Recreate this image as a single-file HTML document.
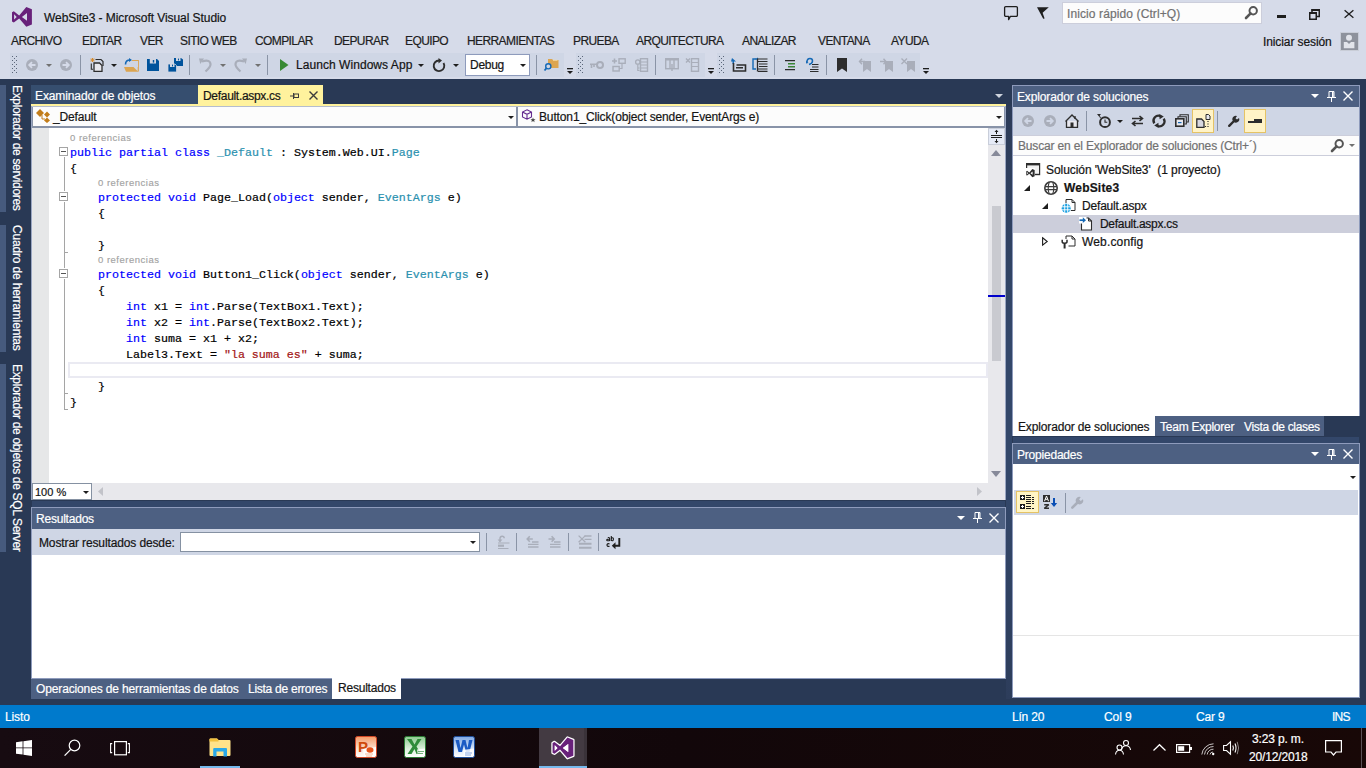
<!DOCTYPE html>
<html><head><meta charset="utf-8">
<style>
*{margin:0;padding:0;box-sizing:border-box}
html,body{width:1366px;height:768px;overflow:hidden;background:#293955;font-family:"Liberation Sans",sans-serif;font-size:11.5px;color:#141414}
.a{position:absolute}
.t{position:absolute;white-space:nowrap;line-height:1;-webkit-text-stroke:0.2px currentColor}
svg{position:absolute;overflow:visible}
.menu{top:35px;font-size:12px;letter-spacing:-0.6px;color:#1E1E1E}
.tb{position:absolute;background:#CFD6E5;top:53px;height:24px}
.sep{position:absolute;top:55px;width:1px;height:20px;background:#8A94A6}
.grip{position:absolute;top:56px;width:6px;height:18px;background-image:radial-gradient(circle at 1px 1px,#5E6A7E 0.9px,transparent 1px);background-size:4px 4px;background-position:0 0}
.vt{position:absolute;left:0;width:6px;background:#465A7D}
.vtext{position:absolute;color:#fff;-webkit-text-stroke:0.2px #fff;white-space:nowrap;line-height:1;transform-origin:0 0;transform:rotate(90deg)}
.code{position:absolute;left:70px;font-family:"Liberation Mono",monospace;font-size:11.67px;line-height:16px;height:16px;white-space:pre;color:#000;-webkit-text-stroke:0.2px currentColor}
.k{color:#0000FF}.ty{color:#2B91AF}.s{color:#A31515}
.cl{position:absolute;font-size:9.5px;letter-spacing:0.5px;color:#A3A3A3;white-space:nowrap;line-height:1;-webkit-text-stroke:0.15px currentColor}
.twt{position:absolute;background:#4D6082;color:#fff}
.wt{color:#fff}
.ob{position:absolute;left:59px;width:9px;height:9px;border:1px solid #A5A5A5;background:#fff}
.ob:after{content:"";position:absolute;left:1px;top:3px;width:5px;height:1px;background:#555}
.ol{position:absolute;left:63px;width:1px;background:#A5A5A5}
</style></head><body>
<!-- ===== TOP AREA ===== -->
<div class="a" style="left:0;top:0;width:1366px;height:79px;background:#D6DBE9"></div>
<svg style="left:12px;top:7px" width="20" height="20" viewBox="0 0 20 20"><path fill="#68217A" fill-rule="evenodd" d="M0 5.2 L1.8 4.2 L7.2 8.4 L14.3 0 L19.9 2.3 V17.5 L14.3 19.7 L7.2 11.4 L1.8 15.5 L0 14.6 Z M2.1 7.3 L4.7 9.9 L2.1 12.6 Z M9.9 9.9 L15 6.1 V13.8 Z"/></svg>
<div class="t" style="left:44px;top:12px;font-size:12px;letter-spacing:-0.061px">WebSite3 - Microsoft Visual Studio</div>

<div class="t menu" style="left:11px">ARCHIVO</div>
<div class="t menu" style="left:82px">EDITAR</div>
<div class="t menu" style="left:140px">VER</div>
<div class="t menu" style="left:180px">SITIO WEB</div>
<div class="t menu" style="left:255px">COMPILAR</div>
<div class="t menu" style="left:334px">DEPURAR</div>
<div class="t menu" style="left:405px">EQUIPO</div>
<div class="t menu" style="left:467px">HERRAMIENTAS</div>
<div class="t menu" style="left:573px">PRUEBA</div>
<div class="t menu" style="left:636px">ARQUITECTURA</div>
<div class="t menu" style="left:742px">ANALIZAR</div>
<div class="t menu" style="left:818px">VENTANA</div>
<div class="t menu" style="left:891px">AYUDA</div>

<!-- feedback / filter -->
<svg style="left:1004px;top:6px" width="15" height="15" viewBox="0 0 15 15"><path d="M1.7 0.65 H12.3 A1.1 1.1 0 0 1 13.4 1.75 V9.3 A1.1 1.1 0 0 1 12.3 10.4 H6.4 L4.6 13.6 V10.4 H1.7 A1.1 1.1 0 0 1 0.6 9.3 V1.75 A1.1 1.1 0 0 1 1.7 0.65 Z" fill="none" stroke="#1E1E1E" stroke-width="1.3" stroke-linejoin="round"/></svg>
<svg style="left:1037px;top:7px" width="12" height="12" viewBox="0 0 12 12"><path d="M0 0.2 H11.8 L5.6 5.8 L7.6 11.5 L6.2 11.8 Z" fill="#1E1E1E"/></svg>
<div class="a" style="left:1062px;top:2px;width:200px;height:22px;background:#FCFCFC;border:1px solid #CCCEDB"></div>
<div class="t" style="left:1067px;top:8px;font-size:12px;letter-spacing:0.107px;color:#717171">Inicio rápido (Ctrl+Q)</div>
<svg style="left:1245px;top:6px" width="13" height="13" viewBox="0 0 13 13"><circle cx="8.2" cy="4.8" r="3.7" fill="none" stroke="#555" stroke-width="2"/><path d="M5.6 7.4 L1 12" stroke="#555" stroke-width="2.6" stroke-linecap="round"/></svg>
<div class="a" style="left:1277px;top:15px;width:9px;height:3px;background:#1E1E1E"></div>
<svg style="left:1309px;top:9px" width="11" height="11" viewBox="0 0 11 11"><path d="M3 3 V0.75 H10.25 V7.5 H7.75" fill="none" stroke="#1E1E1E" stroke-width="1.5"/><rect x="0.75" y="3.75" width="6.5" height="6.5" fill="none" stroke="#1E1E1E" stroke-width="1.5"/><rect x="0" y="3" width="8" height="2" fill="#1E1E1E"/><rect x="2.5" y="0" width="8.5" height="2" fill="#1E1E1E"/></svg>
<svg style="left:1344px;top:10px" width="10" height="8" viewBox="0 0 10 8"><path d="M0.6 0.3 L9.4 7.7 M9.4 0.3 L0.6 7.7" stroke="#1E1E1E" stroke-width="1.3"/></svg>
<div class="t" style="left:1263px;top:36px;font-size:12px;letter-spacing:-0.102px">Iniciar sesión</div>
<svg style="left:1340px;top:32px" width="19" height="19" viewBox="0 0 19 19"><rect x="0.5" y="0.5" width="18" height="18" fill="#8E929C" stroke="#C9CDD7" stroke-width="1"/><circle cx="9" cy="5.8" r="3" fill="#E2E4EA"/><path d="M3.8 10 H7 L9 12 L11 10 H14.4 V16.2 H3.8 Z" fill="#E2E4EA"/></svg>

<!-- toolbars -->
<div class="tb" style="left:10px;width:554px"></div>
<div class="tb" style="left:576px;width:129px"></div>
<div class="tb" style="left:717px;width:203px"></div>
<svg style="left:12px;top:56px" width="5" height="17" viewBox="0 0 5 17"><path fill="#5A6679" d="M0 0h1v1h-1z M4 0h1v1h-1z M2 2h1v1h-1z M0 4h1v1h-1z M4 4h1v1h-1z M2 6h1v1h-1z M0 8h1v1h-1z M4 8h1v1h-1z M2 10h1v1h-1z M0 12h1v1h-1z M4 12h1v1h-1z M2 14h1v1h-1z M0 16h1v1h-1z M4 16h1v1h-1z"/></svg>
<svg style="left:578px;top:56px" width="5" height="17" viewBox="0 0 5 17"><path fill="#5A6679" d="M0 0h1v1h-1z M4 0h1v1h-1z M2 2h1v1h-1z M0 4h1v1h-1z M4 4h1v1h-1z M2 6h1v1h-1z M0 8h1v1h-1z M4 8h1v1h-1z M2 10h1v1h-1z M0 12h1v1h-1z M4 12h1v1h-1z M2 14h1v1h-1z M0 16h1v1h-1z M4 16h1v1h-1z"/></svg>
<svg style="left:719px;top:56px" width="5" height="17" viewBox="0 0 5 17"><path fill="#5A6679" d="M0 0h1v1h-1z M4 0h1v1h-1z M2 2h1v1h-1z M0 4h1v1h-1z M4 4h1v1h-1z M2 6h1v1h-1z M0 8h1v1h-1z M4 8h1v1h-1z M2 10h1v1h-1z M0 12h1v1h-1z M4 12h1v1h-1z M2 14h1v1h-1z M0 16h1v1h-1z M4 16h1v1h-1z"/></svg>
<div class="sep" style="left:80px"></div>
<div class="sep" style="left:189px"></div>
<div class="sep" style="left:267px"></div>
<div class="sep" style="left:536px"></div>
<div class="sep" style="left:655px"></div>
<div class="sep" style="left:774px"></div>
<div class="sep" style="left:826px"></div>
<!-- back/forward -->
<svg style="left:26px;top:59px" width="12" height="12" viewBox="0 0 12 12"><circle cx="6" cy="6" r="6" fill="#A9AEBA"/><path d="M9.5 6 H3.5 M6 3.2 L3.2 6 L6 8.8" fill="none" stroke="#D6DBE9" stroke-width="1.8"/></svg>
<svg style="left:46px;top:64px" width="6" height="3" viewBox="0 0 6 3"><path d="M0 0 H6 L3 3Z" fill="#717171"/></svg>
<svg style="left:60px;top:59px" width="12" height="12" viewBox="0 0 12 12"><circle cx="6" cy="6" r="6" fill="#A9AEBA"/><path d="M2.5 6 H8.5 M6 3.2 L8.8 6 L6 8.8" fill="none" stroke="#D6DBE9" stroke-width="1.8"/></svg>
<!-- new project -->
<svg style="left:90px;top:57px" width="14" height="15" viewBox="0 0 14 15"><path d="M2.5 1 L2.5 5 M0.5 3 H4.5 M1 1.5 L4 4.5 M4 1.5 L1 4.5" stroke="#D68A2B" stroke-width="1"/><path d="M5.5 2.5 H11 L13 4.5 V9" fill="none" stroke="#2D2D2D" stroke-width="1.2"/><path d="M4 6 H9.5 L12 8.5 V14.3 H4 Z" fill="#E8E8EE" stroke="#2D2D2D" stroke-width="1.3"/><path d="M1.3 6.5 V12.3 H3" fill="none" stroke="#2D2D2D" stroke-width="1.1"/></svg>
<svg style="left:111px;top:64px" width="6" height="3" viewBox="0 0 6 3"><path d="M0 0 H6 L3 3Z" fill="#1E1E1E"/></svg>
<!-- open -->
<svg style="left:124px;top:58px" width="15" height="14" viewBox="0 0 15 14"><path d="M8 2.5 H14.3 V13.5" fill="none" stroke="#DCA550" stroke-width="1.2"/><rect x="7" y="3" width="7" height="6" fill="#D0D5E2"/><path d="M0 9 H9.5 L14.3 13.8 H2 Z" fill="#DCA550"/><path d="M1.5 6.5 Q1.5 2 6 2" fill="none" stroke="#1569B6" stroke-width="1.6"/><path d="M5 0 L8 2 L5 4 Z" fill="#1569B6"/></svg>
<!-- save -->
<svg style="left:147px;top:59px" width="12" height="12" viewBox="0 0 12 12"><path d="M0 0 H10 L12 2 V12 H0 Z" fill="#00539C"/><rect x="2.8" y="0" width="6.2" height="4.5" fill="#D0D5E2"/><rect x="5.8" y="1" width="1.4" height="2.6" fill="#00539C"/></svg>
<svg style="left:168px;top:58px" width="15" height="14" viewBox="0 0 15 14"><path d="M6 0 H13 L15 1.5 V8 H6 Z" fill="#00539C"/><rect x="8" y="0" width="4.5" height="3" fill="#D0D5E2"/><rect x="10" y="0.6" width="1" height="1.8" fill="#00539C"/><path d="M0 6 H7 L8.5 7.5 V14 H0 Z" fill="#00539C" stroke="#D0D5E2" stroke-width="0.8"/><rect x="2" y="6" width="4.5" height="3" fill="#D0D5E2"/><rect x="4" y="6.6" width="1" height="1.8" fill="#00539C"/></svg>
<!-- undo/redo -->
<svg style="left:199px;top:58px" width="13" height="14" viewBox="0 0 13 14"><path d="M3 3.5 Q11.5 1 11.5 6.5 Q11.5 9 6.5 13.5" fill="none" stroke="#A9AEBA" stroke-width="2.2"/><path d="M0 0.5 L5 0.5 L1.3 6 Z" fill="#A9AEBA"/></svg>
<svg style="left:220px;top:64px" width="6" height="3" viewBox="0 0 6 3"><path d="M0 0 H6 L3 3Z" fill="#717171"/></svg>
<svg style="left:234px;top:58px" width="13" height="14" viewBox="0 0 13 14"><path d="M10 3.5 Q1.5 1 1.5 6.5 Q1.5 9 6.5 13.5" fill="none" stroke="#A9AEBA" stroke-width="2.2"/><path d="M13 0.5 L8 0.5 L11.7 6 Z" fill="#A9AEBA"/></svg>
<svg style="left:255px;top:64px" width="6" height="3" viewBox="0 0 6 3"><path d="M0 0 H6 L3 3Z" fill="#717171"/></svg>
<!-- play -->
<svg style="left:280px;top:59px" width="9" height="12" viewBox="0 0 9 12"><path d="M0 0 L8.5 6 L0 12 Z" fill="#388A34"/></svg>
<div class="t" style="left:296px;top:59px;font-size:12px;letter-spacing:0.053px">Launch Windows App</div>
<svg style="left:418px;top:64px" width="6" height="3" viewBox="0 0 6 3"><path d="M0 0 H6 L3 3Z" fill="#1E1E1E"/></svg>
<svg style="left:432px;top:58px" width="13" height="14" viewBox="0 0 13 14"><path d="M11.5 5 A5.3 5.3 0 1 1 7 2.5" fill="none" stroke="#2D2D2D" stroke-width="1.9"/><path d="M6.5 0 L10 2.6 L6.5 5.5 Z" fill="#2D2D2D"/></svg>
<svg style="left:453px;top:64px" width="6" height="3" viewBox="0 0 6 3"><path d="M0 0 H6 L3 3Z" fill="#1E1E1E"/></svg>
<div class="a" style="left:465px;top:54px;width:65px;height:22px;background:#fff;border:1px solid #8E9BBC"></div>
<div class="t" style="left:470px;top:59px;font-size:12px;letter-spacing:-0.269px">Debug</div>
<svg style="left:520px;top:64px" width="6" height="3" viewBox="0 0 6 3"><path d="M0 0 H6 L3 3Z" fill="#1E1E1E"/></svg>
<!-- find in files -->
<svg style="left:544px;top:58px" width="16" height="14" viewBox="0 0 16 14"><path d="M4 1 H8 L9 2 H14.5 V10 H4 Z" fill="#DCA550"/><rect x="9" y="1.8" width="4.5" height="1" fill="#F3D9A6"/><circle cx="4.3" cy="8.3" r="2.6" fill="#D0D5E2" stroke="#1569B6" stroke-width="1.4"/><path d="M2.5 10.2 L0.5 12.5" stroke="#1569B6" stroke-width="1.8"/></svg>
<svg style="left:567px;top:68px" width="6" height="6" viewBox="0 0 6 6"><rect width="6" height="1.3" fill="#1E1E1E"/><path d="M0 3 H6 L3 6Z" fill="#1E1E1E"/></svg>
<!-- grayed icons toolbar2 -->
<svg style="left:590px;top:61px" width="14" height="8" viewBox="0 0 14 8"><circle cx="10" cy="4" r="3" fill="none" stroke="#A9AEBA" stroke-width="2"/><path d="M0 3.2 H7 M1.5 3 V7 M4 3 V6" stroke="#A9AEBA" stroke-width="1.6"/></svg>
<svg style="left:612px;top:58px" width="14" height="14" viewBox="0 0 14 14"><path d="M0 3 H5 M2.5 0.5 V5.5" stroke="#A9AEBA" stroke-width="1.6"/><rect x="7" y="0.8" width="6.2" height="4.5" fill="none" stroke="#A9AEBA" stroke-width="1.4"/><rect x="1" y="8.5" width="6.2" height="4.5" fill="none" stroke="#A9AEBA" stroke-width="1.4"/><path d="M10 5.3 V10.5 H7.2" fill="none" stroke="#A9AEBA" stroke-width="1.2"/></svg>
<svg style="left:635px;top:58px" width="13" height="14" viewBox="0 0 13 14"><circle cx="2.8" cy="4" r="2.2" fill="none" stroke="#A9AEBA" stroke-width="1.3"/><path d="M2.8 6.2 V13 M2.8 10 H4.5 M2.8 12.5 H4.5" stroke="#A9AEBA" stroke-width="1.2"/><rect x="5.5" y="0.7" width="7" height="12.6" fill="none" stroke="#A9AEBA" stroke-width="1.4"/><path d="M5.5 4 H12.5 M5.5 7 H12.5 M5.5 10 H12.5" stroke="#A9AEBA" stroke-width="1.2"/></svg>
<svg style="left:665px;top:58px" width="14" height="14" viewBox="0 0 14 14"><rect x="0.7" y="0.7" width="12.6" height="10" fill="none" stroke="#A9AEBA" stroke-width="1.4"/><rect x="0" y="0" width="14" height="2.5" fill="#A9AEBA"/><path d="M5 2 V10 M9 2 V10 M7 6 V13" stroke="#A9AEBA" stroke-width="1.4"/></svg>
<svg style="left:686px;top:58px" width="13" height="14" viewBox="0 0 13 14"><path d="M0 0.5 L4 4.5 M4 0.5 L0 4.5" stroke="#A9AEBA" stroke-width="1.4"/><rect x="5.5" y="0.7" width="7" height="12.6" fill="none" stroke="#A9AEBA" stroke-width="1.4"/><path d="M5.5 4.5 H12.5 M5.5 8.5 H12.5" stroke="#A9AEBA" stroke-width="1.2"/></svg>
<svg style="left:708px;top:68px" width="6" height="6" viewBox="0 0 6 6"><rect width="6" height="1.3" fill="#1E1E1E"/><path d="M0 3 H6 L3 6Z" fill="#1E1E1E"/></svg>
<!-- toolbar3 -->
<svg style="left:731px;top:58px" width="15" height="14" viewBox="0 0 15 14"><path d="M1 0 L5 3.5 H3 V6 H1.5 V3.5 H0 Z" fill="#1569B6"/><path d="M2.5 5 V13 H14.5 V7 H5.5" fill="none" stroke="#2D2D2D" stroke-width="1.6"/><rect x="5" y="9" width="7" height="1.5" fill="#2D2D2D"/></svg>
<svg style="left:752px;top:58px" width="16" height="14" viewBox="0 0 16 14"><path d="M4 1 H1 V11 H4" fill="none" stroke="#1569B6" stroke-width="1.4"/><path d="M3 1 L6 -0.5 V2.5 Z" fill="#1569B6"/><path d="M6 1 H15.5 M6 3.5 H15.5 M7 6 H15.5 M7 8.5 H15.5 M6 11 H15.5 M6 13.3 H15.5" stroke="#2D2D2D" stroke-width="1.2"/><path d="M5.5 0.5 V13.5" stroke="#2D2D2D" stroke-width="1.3"/></svg>
<svg style="left:785px;top:60px" width="11" height="11" viewBox="0 0 11 11"><path d="M0 0.6 H10 M3 3.6 H10 M3 6.6 H10 M0 9.6 H10" stroke="#2D2D2D" stroke-width="1.2"/><path d="M3 3.6 H10 M3 6.6 H10" stroke="#388A34" stroke-width="1.2"/></svg>
<svg style="left:806px;top:58px" width="13" height="14" viewBox="0 0 13 14"><path d="M1 4 Q1 0.5 4 0.5 Q6.5 0.5 6.5 3 Q6.5 5.5 3 6.5" fill="none" stroke="#1569B6" stroke-width="1.5"/><path d="M0 2.5 L2.5 5 L0 5.5Z" fill="#1569B6"/><path d="M6 6.5 H12.5 M6 9 H12.5 M4 11.5 H12.5 M4 13.5 H12.5" stroke="#2D2D2D" stroke-width="1.2"/></svg>
<svg style="left:837px;top:58px" width="10" height="14" viewBox="0 0 10 14"><path d="M0 0 H10 V14 L5 10.5 L0 14 Z" fill="#2D2D2D"/></svg>
<svg style="left:859px;top:58px" width="12" height="14" viewBox="0 0 12 14"><path d="M4 3 H12 V14 L8 11 L4 14 Z" fill="#A9AEBA"/><path d="M0 3.5 H6 M3 0.8 L0.5 3.5 L3 6.2" fill="none" stroke="#A9AEBA" stroke-width="1.4"/></svg>
<svg style="left:880px;top:58px" width="13" height="14" viewBox="0 0 13 14"><path d="M5 3 H13 V14 L9 11 L5 14 Z" fill="#A9AEBA"/><path d="M0 3.5 H6 M3.5 0.8 L6 3.5 L3.5 6.2" fill="none" stroke="#A9AEBA" stroke-width="1.4"/></svg>
<svg style="left:901px;top:58px" width="14" height="14" viewBox="0 0 14 14"><path d="M6 3 H14 V14 L10 11 L6 14 Z" fill="#A9AEBA"/><path d="M0.5 0.5 L6 6 M6 0.5 L0.5 6" stroke="#A9AEBA" stroke-width="1.4"/></svg>
<svg style="left:923px;top:68px" width="6" height="6" viewBox="0 0 6 6"><rect width="6" height="1.3" fill="#1E1E1E"/><path d="M0 3 H6 L3 6Z" fill="#1E1E1E"/></svg>

<!-- splitters -->
<div class="a" style="left:1006px;top:106px;width:6px;height:593px;background:linear-gradient(to bottom,#2C3B58,#33476A 40%,#33476A 65%,#2D3D5B)"></div>
<div class="a" style="left:32px;top:501px;width:973px;height:6px;background:#33476A"></div>
<div class="a" style="left:1013px;top:437px;width:346px;height:6px;background:#33476A"></div>
<!-- ===== LEFT VERTICAL TABS ===== -->
<div class="vt" style="top:85px;height:127px"></div>
<div class="vt" style="top:225px;height:127px"></div>
<div class="vt" style="top:364px;height:188px"></div>
<div class="vtext" style="left:23px;top:85px;font-size:12px;letter-spacing:-0.33px">Explorador de servidores</div>
<div class="vtext" style="left:23px;top:225px;font-size:12px;letter-spacing:-0.17px">Cuadro de herramientas</div>
<div class="vtext" style="left:23px;top:364px;font-size:12px;letter-spacing:-0.33px">Explorador de objetos de SQL Server</div>

<!-- ===== DOCUMENT TABS ===== -->
<div class="a" style="left:31px;top:85px;width:167px;height:19px;background:#364E6F"></div>
<div class="t wt" style="left:35px;top:90px;font-size:12px;letter-spacing:-0.108px">Examinador de objetos</div>
<div class="a" style="left:198px;top:85px;width:125px;height:19px;background:#FFF29D"></div>
<div class="t" style="left:203px;top:90px;font-size:12px;letter-spacing:-0.303px">Default.aspx.cs</div>
<svg style="left:290px;top:93px" width="9" height="6" viewBox="0 0 9 6"><path d="M0 3 H3.5 M3.5 0 V6" stroke="#3C3C3C" stroke-width="1"/><rect x="4" y="1" width="4.5" height="3.5" fill="none" stroke="#3C3C3C" stroke-width="1"/></svg>
<svg style="left:309px;top:91px" width="9" height="9" viewBox="0 0 9 9"><path d="M0.5 0.5 L8.5 8.5 M8.5 0.5 L0.5 8.5" stroke="#3C3C3C" stroke-width="1.4"/></svg>
<svg style="left:995px;top:94px" width="8" height="4" viewBox="0 0 8 4"><path d="M0 0 H8 L4 4Z" fill="#CED4DD"/></svg>
<div class="a" style="left:31px;top:104px;width:975px;height:2px;background:#FFF29D"></div>

<!-- ===== NAV BAR ===== -->
<div class="a" style="left:31px;top:106px;width:975px;height:394px;background:#9AA6C2"></div>
<div class="a" style="left:32px;top:106px;width:973px;height:22px;background:#8893A8"></div>
<div class="a" style="left:32px;top:106px;width:973px;height:1px;background:#B4BDCE"></div>
<div class="a" style="left:33px;top:107px;width:483px;height:19px;background:#FCFCFC"></div>
<div class="a" style="left:518px;top:107px;width:486px;height:19px;background:#FCFCFC"></div>
<svg style="left:36px;top:109px" width="15" height="14" viewBox="0 0 15 14"><path d="M4 0 L8 4 L4 8 L0 4 Z" fill="#C27D1A"/><path d="M6 6 V10 H9" fill="none" stroke="#C27D1A" stroke-width="1"/><path d="M11 2.5 L14 5.5 L11 8.5 L8 5.5 Z M11 8.5 L14 11.5 L11 14 L8 11.5 Z" fill="#C27D1A"/></svg>
<div class="t" style="left:53px;top:111px;font-size:12px;letter-spacing:-0.143px">_Default</div>
<svg style="left:508px;top:116px" width="6" height="3" viewBox="0 0 6 3"><path d="M0 0 H6 L3 3Z" fill="#1E1E1E"/></svg>
<svg style="left:522px;top:109px" width="15" height="14" viewBox="0 0 15 14"><path d="M5 0.8 L9.5 3 V8 L5 10.2 L0.5 8 V3 Z M0.5 3 L5 5.3 L9.5 3 M5 5.3 V10.2" fill="none" stroke="#652D90" stroke-width="1.1"/><path d="M11 8.5 L11.7 10.3 L13.5 10.3 L12.1 11.4 L12.6 13.2 L11 12.1 L9.4 13.2 L9.9 11.4 L8.5 10.3 L10.3 10.3 Z" fill="#424242"/></svg>
<div class="t" style="left:539px;top:111px;font-size:12px;letter-spacing:-0.131px">Button1_Click(object sender, EventArgs e)</div>
<svg style="left:996px;top:116px" width="6" height="3" viewBox="0 0 6 3"><path d="M0 0 H6 L3 3Z" fill="#1E1E1E"/></svg>

<!-- ===== EDITOR ===== -->
<div class="a" style="left:32px;top:128px;width:973px;height:372px;background:#fff"></div>
<div class="a" style="left:32px;top:128px;width:17px;height:355px;background:#E6E7E8"></div>
<!-- vertical scrollbar -->
<div class="a" style="left:988px;top:128px;width:17px;height:355px;background:#E8E8EC"></div>
<div class="a" style="left:988px;top:128px;width:17px;height:17px;background:#E6EBF7;border:1px solid #C9CEDA"></div>
<svg style="left:991px;top:129px" width="11" height="15" viewBox="0 0 11 15"><path d="M0 6.5 H11 M0 8.5 H11" stroke="#1E1E1E" stroke-width="1"/><path d="M5.5 2 V5 M5.5 10 V13" stroke="#1E1E1E" stroke-width="1"/><path d="M3.5 3 L5.5 0.8 L7.5 3Z M3.5 12 L5.5 14.2 L7.5 12Z" fill="#1E1E1E"/></svg>
<svg style="left:991px;top:150px" width="10" height="6" viewBox="0 0 10 6"><path d="M0 6 L5 0 L10 6Z" fill="#868999"/></svg>
<div class="a" style="left:992px;top:206px;width:9px;height:155px;background:#C9CAD0"></div>
<div class="a" style="left:988px;top:295px;width:17px;height:2px;background:#0000CC"></div>
<svg style="left:991px;top:471px" width="10" height="6" viewBox="0 0 10 6"><path d="M0 0 L10 0 L5 6Z" fill="#868999"/></svg>
<!-- horizontal scrollbar -->
<div class="a" style="left:32px;top:483px;width:973px;height:17px;background:#E8E8EC"></div>
<div class="a" style="left:32px;top:483px;width:60px;height:17px;background:#fff;border:1px solid #8591A2"></div>
<div class="t" style="left:35px;top:487px;font-size:11px">100 %</div>
<svg style="left:83px;top:491px" width="6" height="3" viewBox="0 0 6 3"><path d="M0 0 H6 L3 3Z" fill="#1E1E1E"/></svg>
<svg style="left:98px;top:487px" width="5" height="9" viewBox="0 0 5 9"><path d="M5 0 V9 L0 4.5Z" fill="#C2C3C9"/></svg>
<svg style="left:977px;top:487px" width="5" height="9" viewBox="0 0 5 9"><path d="M0 0 V9 L5 4.5Z" fill="#C2C3C9"/></svg>

<!-- outlining -->
<div class="ob" style="top:147px"></div>
<div class="ob" style="top:192px"></div>
<div class="ob" style="top:269px"></div>
<div class="a" style="left:64px;top:157px;width:1px;height:34px;background:#A5A5A5"></div>
<div class="a" style="left:64px;top:202px;width:1px;height:66px;background:#A5A5A5"></div>
<div class="a" style="left:64px;top:279px;width:1px;height:131px;background:#A5A5A5"></div>
<div class="a" style="left:64px;top:252px;width:4px;height:1px;background:#A5A5A5"></div>
<div class="a" style="left:64px;top:393px;width:4px;height:1px;background:#A5A5A5"></div>
<div class="a" style="left:64px;top:409px;width:4px;height:1px;background:#A5A5A5"></div>

<!-- code -->
<div class="cl" style="left:70px;top:133px">0 referencias</div>
<div class="code" style="top:145px"><span class="k">public</span> <span class="k">partial</span> <span class="k">class</span> <span class="ty">_Default</span> : System.Web.UI.<span class="ty">Page</span></div>
<div class="code" style="top:161px">{</div>
<div class="cl" style="left:98px;top:178px">0 referencias</div>
<div class="code" style="top:190px">    <span class="k">protected</span> <span class="k">void</span> Page_Load(<span class="k">object</span> sender, <span class="ty">EventArgs</span> e)</div>
<div class="code" style="top:206px">    {</div>
<div class="code" style="top:238px">    }</div>
<div class="cl" style="left:98px;top:255px">0 referencias</div>
<div class="code" style="top:267px">    <span class="k">protected</span> <span class="k">void</span> Button1_Click(<span class="k">object</span> sender, <span class="ty">EventArgs</span> e)</div>
<div class="code" style="top:283px">    {</div>
<div class="code" style="top:299px">        <span class="k">int</span> x1 = <span class="k">int</span>.Parse(TextBox1.Text);</div>
<div class="code" style="top:315px">        <span class="k">int</span> x2 = <span class="k">int</span>.Parse(TextBox2.Text);</div>
<div class="code" style="top:331px">        <span class="k">int</span> suma = x1 + x2;</div>
<div class="code" style="top:347px">        Label3.Text = <span class="s">"la suma es"</span> + suma;</div>
<div class="a" style="left:68px;top:362px;width:920px;height:16px;border:2px solid #EAEAF2"></div>
<div class="code" style="top:379px">    }</div>
<div class="code" style="top:395px">}</div>

<!-- ===== RESULTS PANEL ===== -->
<div class="a" style="left:31px;top:507px;width:975px;height:172px;border:1px solid #8E9BBC;background:#fff"></div>
<div class="twt" style="left:32px;top:508px;width:973px;height:21px"></div>
<div class="t wt" style="left:36px;top:513px;font-size:12px;letter-spacing:-0.216px">Resultados</div>
<svg style="left:957px;top:516px" width="8" height="4" viewBox="0 0 8 4"><path d="M0 0 H8 L4 4Z" fill="#fff"/></svg>
<svg style="left:973px;top:512px" width="9" height="11" viewBox="0 0 9 11"><path d="M2 0.5 H7 V6.5 H2 Z M0 6.5 H9 M4.5 6.5 V11" fill="none" stroke="#fff" stroke-width="1"/><rect x="5" y="1" width="1.5" height="5.5" fill="#fff"/></svg>
<svg style="left:989px;top:513px" width="10" height="10" viewBox="0 0 10 10"><path d="M0.5 0.5 L9.5 9.5 M9.5 0.5 L0.5 9.5" stroke="#fff" stroke-width="1.4"/></svg>
<div class="a" style="left:32px;top:529px;width:973px;height:26px;background:#CFD6E5"></div>
<div class="t" style="left:39px;top:537px;font-size:12px;letter-spacing:-0.122px">Mostrar resultados desde:</div>
<div class="a" style="left:180px;top:532px;width:300px;height:20px;background:#fff;border:1px solid #8591A2"></div>
<svg style="left:470px;top:541px" width="6" height="3" viewBox="0 0 6 3"><path d="M0 0 H6 L3 3Z" fill="#1E1E1E"/></svg>
<div class="a" style="left:486px;top:533px;width:1px;height:18px;background:#8A94A6"></div>
<div class="a" style="left:516px;top:533px;width:1px;height:18px;background:#8A94A6"></div>
<div class="a" style="left:568px;top:533px;width:1px;height:18px;background:#8A94A6"></div>
<div class="a" style="left:598px;top:533px;width:1px;height:18px;background:#8A94A6"></div>
<svg style="left:496px;top:535px" width="14" height="15" viewBox="0 0 14 15"><path d="M4 6.5 V3.6 Q4 1.2 6.2 1.2 Q8.2 1.2 8.2 3.2" fill="none" stroke="#A9AEBA" stroke-width="1.4"/><path d="M1.6 4.6 L4 7.4 L6.4 4.6Z" fill="#A9AEBA"/><path d="M2 8 H13.5 M2 13.5 H12.5" stroke="#A9AEBA" stroke-width="1.1"/><rect x="2" y="9.6" width="6" height="2.2" fill="#A9AEBA"/></svg>
<svg style="left:526px;top:535px" width="13" height="14" viewBox="0 0 13 14"><path d="M1.2 4 H6.8 M3.8 1.2 L1.2 4 L3.8 6.8" fill="none" stroke="#A9AEBA" stroke-width="1.6"/><path d="M6 7 H12.5 M2 9.3 H12.5 M2 12 H12.5" stroke="#A9AEBA" stroke-width="1.3"/></svg>
<svg style="left:548px;top:535px" width="13" height="14" viewBox="0 0 13 14"><path d="M0.5 4 H6.2 M3.6 1.2 L6.2 4 L3.6 6.8" fill="none" stroke="#A9AEBA" stroke-width="1.6"/><path d="M6 7 H12.5 M2 9.3 H12.5 M2 12 H12.5" stroke="#A9AEBA" stroke-width="1.3"/></svg>
<svg style="left:578px;top:535px" width="14" height="14" viewBox="0 0 14 14"><path d="M0.6 0.6 L7.4 7.2 M7.4 0.6 L0.6 7.2" stroke="#A9AEBA" stroke-width="1.3"/><path d="M6.5 1 H13.5 M6.5 4.3 H13.5" stroke="#A9AEBA" stroke-width="1.3"/><path d="M1 8.8 H13.5 M1 12.8 H13.5" stroke="#A9AEBA" stroke-width="1.9"/></svg>
<svg style="left:606px;top:536px" width="16" height="14" viewBox="0 0 16 14"><path d="M1.8 1.5 Q3.6 1.2 3.6 2.6 V5 M3.4 3.3 Q0.6 3 0.7 4.2 Q0.9 5.2 3.4 4.6 M5.3 0 V4.9 M5.3 3.2 Q5.6 1.6 6.5 1.7 Q7.6 1.8 7.4 3.3 Q7.3 4.9 6.3 4.8 Q5.5 4.7 5.3 4" fill="none" stroke="#1E1E1E" stroke-width="1.1"/><path d="M3.5 7.8 Q1 7.3 1 9 Q1 10.8 3.5 10.3" fill="none" stroke="#1E1E1E" stroke-width="1.2"/><path d="M13.3 2 V9.8 H8" fill="none" stroke="#1E1E1E" stroke-width="1.9"/><path d="M9.5 6.2 L5.8 9.8 L9.5 13.2 Z" fill="#1E1E1E"/></svg>

<!-- bottom tabs -->
<div class="a" style="left:31px;top:679px;width:301px;height:20px;background:#4D6082"></div>
<div class="t wt" style="left:36px;top:683px;font-size:12px;letter-spacing:-0.136px">Operaciones de herramientas de datos</div>
<div class="t wt" style="left:248px;top:683px;font-size:12px;letter-spacing:-0.265px">Lista de errores</div>
<div class="a" style="left:332px;top:678px;width:69px;height:21px;background:#fff"></div>
<div class="t" style="left:338px;top:682px;font-size:12px;letter-spacing:-0.216px">Resultados</div>

<!-- ===== SOLUTION EXPLORER ===== -->
<div class="a" style="left:1012px;top:85px;width:348px;height:331px;background:#fff;border:1px solid #8E9BBC;border-bottom:none"></div>
<div class="twt" style="left:1013px;top:86px;width:346px;height:21px"></div>
<div class="t wt" style="left:1017px;top:91px;font-size:12px;letter-spacing:-0.141px">Explorador de soluciones</div>
<svg style="left:1311px;top:94px" width="8" height="4" viewBox="0 0 8 4"><path d="M0 0 H8 L4 4Z" fill="#fff"/></svg>
<svg style="left:1327px;top:91px" width="9" height="11" viewBox="0 0 9 11"><path d="M2 0.5 H7 V6.5 H2 Z M0 6.5 H9 M4.5 6.5 V11" fill="none" stroke="#fff" stroke-width="1"/><rect x="5" y="1" width="1.5" height="5.5" fill="#fff"/></svg>
<svg style="left:1343px;top:91px" width="10" height="10" viewBox="0 0 10 10"><path d="M0.5 0.5 L9.5 9.5 M9.5 0.5 L0.5 9.5" stroke="#fff" stroke-width="1.4"/></svg>
<div class="a" style="left:1013px;top:107px;width:346px;height:28px;background:#CFD6E5"></div>
<svg style="left:1022px;top:115px" width="12" height="12" viewBox="0 0 12 12"><circle cx="6" cy="6" r="6" fill="#A9AEBA"/><path d="M9.5 6 H3.5 M6 3.2 L3.2 6 L6 8.8" fill="none" stroke="#CFD6E5" stroke-width="1.8"/></svg>
<svg style="left:1044px;top:115px" width="12" height="12" viewBox="0 0 12 12"><circle cx="6" cy="6" r="6" fill="#A9AEBA"/><path d="M2.5 6 H8.5 M6 3.2 L8.8 6 L6 8.8" fill="none" stroke="#CFD6E5" stroke-width="1.8"/></svg>
<svg style="left:1065px;top:114px" width="14" height="14" viewBox="0 0 14 14"><path d="M1.5 7 V13.3 H12.5 V7" fill="#E8E8EE" stroke="#2D2D2D" stroke-width="1.3"/><path d="M0.5 7.5 L7 1 L13.5 7.5" fill="none" stroke="#2D2D2D" stroke-width="1.4"/><path d="M10 2 V5" stroke="#2D2D2D" stroke-width="1.3"/><rect x="5.5" y="8.5" width="3" height="5" fill="#2D2D2D"/></svg>
<div class="a" style="left:1086px;top:111px;width:1px;height:20px;background:#8A94A6"></div>
<svg style="left:1097px;top:114px" width="14" height="14" viewBox="0 0 14 14"><path d="M0 0 H4 L2 2.5Z" fill="#2D2D2D"/><path d="M2 1 L3.5 4" stroke="#2D2D2D" stroke-width="1"/><circle cx="8" cy="8.2" r="4.9" fill="none" stroke="#2D2D2D" stroke-width="2"/><path d="M8 5.5 V8.3 H10.3" fill="none" stroke="#2D2D2D" stroke-width="1.1"/></svg>
<svg style="left:1117px;top:120px" width="6" height="3" viewBox="0 0 6 3"><path d="M0 0 H6 L3 3Z" fill="#1E1E1E"/></svg>
<svg style="left:1131px;top:115px" width="13" height="12" viewBox="0 0 13 12"><path d="M1 3.5 H11 M8.5 1 L11.5 3.5 L8.5 6" fill="none" stroke="#2D2D2D" stroke-width="1.6"/><path d="M12 8.5 H2 M4.5 6 L1.5 8.5 L4.5 11" fill="none" stroke="#2D2D2D" stroke-width="1.6"/></svg>
<svg style="left:1152px;top:114px" width="14" height="14" viewBox="0 0 14 14"><path d="M2.3 9.3 A5 5 0 0 1 8.8 2.2" fill="none" stroke="#2D2D2D" stroke-width="2.3"/><path d="M11.7 4.7 A5 5 0 0 1 5.2 11.8" fill="none" stroke="#2D2D2D" stroke-width="2.3"/><path d="M7.3 0 L11.8 2.4 L7.6 5.3Z M6.7 14 L2.2 11.6 L6.4 8.7Z" fill="#2D2D2D"/></svg>
<svg style="left:1175px;top:114px" width="14" height="13" viewBox="0 0 14 13"><path d="M5 2.5 V0.7 H13.3 V8 H11.5" fill="none" stroke="#2D2D2D" stroke-width="1.1"/><path d="M3 4.5 V2.7 H11.3 V10 H9.5" fill="none" stroke="#2D2D2D" stroke-width="1.1"/><rect x="0.8" y="4.8" width="8" height="7.4" fill="#E8E8EE" stroke="#2D2D2D" stroke-width="1.6"/><rect x="3" y="8" width="3.5" height="1.2" fill="#1569B6"/></svg>
<div class="a" style="left:1192px;top:109px;width:22px;height:24px;background:#FFF3C7;border:1px solid #E5C365"></div>
<svg style="left:1196px;top:114px" width="15" height="14" viewBox="0 0 15 14"><path d="M0.8 5 H5.5 L8 7.5 V13.3 H0.8 Z" fill="#D8D8E0" stroke="#2D2D2D" stroke-width="1.3"/><path d="M10 0.5 H12.5 L14 2 V5.5 H10 Z" fill="#E8E8EE" stroke="#2D2D2D" stroke-width="1"/><path d="M12 7 v1 M12 9.5 v1 M12 12 v1 M9.5 12 v1" stroke="#2D2D2D" stroke-width="1.2"/></svg>
<div class="a" style="left:1217px;top:111px;width:1px;height:20px;background:#8A94A6"></div>
<svg style="left:1228px;top:115px" width="12" height="12" viewBox="0 0 12 12"><path d="M1.2 10.8 L6 6" stroke="#2D2D2D" stroke-width="2.4" stroke-linecap="round"/><path d="M5.5 6.5 A3.3 3.3 0 0 1 9 1 L7.5 3.2 L9 4.5 L11 3 A3.3 3.3 0 0 1 5.5 6.5Z" fill="#2D2D2D"/></svg>
<div class="a" style="left:1244px;top:109px;width:22px;height:24px;background:#FFF3C7;border:1px solid #E5C365"></div>
<div class="a" style="left:1248px;top:121px;width:14px;height:2px;background:#2D2D2D"></div>
<div class="a" style="left:1254px;top:119px;width:8px;height:4px;background:#2D2D2D"></div>
<!-- search -->
<div class="a" style="left:1013px;top:135px;width:346px;height:21px;background:#CCCEDB"></div>
<div class="a" style="left:1013px;top:136px;width:346px;height:19px;background:#FCFCFC"></div>
<div class="t" style="left:1018px;top:140px;font-size:12px;letter-spacing:-0.157px;color:#717171">Buscar en el Explorador de soluciones (Ctrl+´)</div>
<svg style="left:1331px;top:139px" width="13" height="13" viewBox="0 0 13 13"><circle cx="8.2" cy="4.8" r="3.7" fill="none" stroke="#555" stroke-width="2"/><path d="M5.6 7.4 L1 12" stroke="#555" stroke-width="2.6" stroke-linecap="round"/></svg>
<svg style="left:1349px;top:144px" width="6" height="3" viewBox="0 0 6 3"><path d="M0 0 H6 L3 3Z" fill="#717171"/></svg>
<!-- tree -->
<svg style="left:1026px;top:163px" width="15" height="15" viewBox="0 0 15 15"><rect x="0.6" y="0.6" width="13" height="11" fill="#F2F2F2" stroke="#2D2D2D" stroke-width="1.2"/><rect x="0" y="0" width="14" height="2.4" fill="#2D2D2D"/><rect x="0" y="5" width="9" height="10" fill="#fff"/><g transform="translate(0.3,6) scale(0.42)"><path fill="#2D2D2D" fill-rule="evenodd" d="M0 5.2 L1.8 4.2 L7.2 8.4 L14.3 0 L19.9 2.3 V17.5 L14.3 19.7 L7.2 11.4 L1.8 15.5 L0 14.6 Z M2.1 7.3 L4.7 9.9 L2.1 12.6 Z M9.9 9.9 L15 6.1 V13.8 Z"/></g><path d="M9 11.4 H13.8" stroke="#2D2D2D" stroke-width="1.2"/></svg>
<div class="t" style="left:1046px;top:164px;font-size:12px;letter-spacing:-0.055px">Solución 'WebSite3'&nbsp; (1 proyecto)</div>
<svg style="left:1024px;top:185px" width="6" height="6" viewBox="0 0 6 6"><path d="M6 0 V6 H0Z" fill="#1E1E1E"/></svg>
<svg style="left:1044px;top:181px" width="14" height="14" viewBox="0 0 14 14"><circle cx="7" cy="7" r="6.2" fill="none" stroke="#3C3C3C" stroke-width="1.6"/><path d="M1 5.6 H13 M1 8.6 H13" stroke="#3C3C3C" stroke-width="1.3"/><path d="M5.2 1.2 Q3.2 7 5.2 12.8 M8.8 1.2 Q10.8 7 8.8 12.8" fill="none" stroke="#3C3C3C" stroke-width="1.1"/></svg>
<div class="t" style="left:1064px;top:182px;font-size:12px;letter-spacing:0.186px;font-weight:bold">WebSite3</div>
<svg style="left:1042px;top:203px" width="6" height="6" viewBox="0 0 6 6"><path d="M6 0 V6 H0Z" fill="#1E1E1E"/></svg>
<svg style="left:1061px;top:199px" width="16" height="15" viewBox="0 0 16 15"><g transform="translate(4.5,0)"><path d="M0.5 0.5 H6.5 L9.5 3.5 V11.5 H0.5 Z" fill="#fff" stroke="#2D2D2D" stroke-width="1"/><path d="M6.5 0.5 V3.5 H9.5" fill="none" stroke="#2D2D2D" stroke-width="1"/></g><circle cx="5.2" cy="9.3" r="5.2" fill="#fff"/><circle cx="5.2" cy="9.3" r="4.5" fill="#1BA1E2"/><path d="M0.8 7.8 H9.6 M0.8 10.8 H9.6 M3.7 4.8 V13.8 M6.7 4.8 V13.8" stroke="#fff" stroke-width="0.9"/></svg>
<div class="t" style="left:1082px;top:200px;font-size:12px;letter-spacing:-0.182px">Default.aspx</div>
<div class="a" style="left:1013px;top:215px;width:346px;height:18px;background:#CCCEDB"></div>
<svg style="left:1079px;top:217px" width="15" height="15" viewBox="0 0 15 15"><g transform="translate(2,0.5)"><path d="M0.5 0.5 H7.5 L10.5 3.5 V12.5 H0.5 Z" fill="#fff" stroke="#2D2D2D" stroke-width="1.1"/><path d="M7.5 0.5 V3.5 H10.5" fill="none" stroke="#2D2D2D" stroke-width="1"/></g><rect x="0" y="0" width="7.5" height="6.5" fill="#fff"/><path d="M0.5 3.2 H4.5" stroke="#1569B6" stroke-width="1.7"/><path d="M3.8 0.3 L7 3.2 L3.8 6.1 Z" fill="#1569B6"/></svg>
<div class="t" style="left:1100px;top:218px;font-size:12px;letter-spacing:-0.296px">Default.aspx.cs</div>
<svg style="left:1042px;top:237px" width="6" height="9" viewBox="0 0 6 9"><path d="M0.6 0.8 L5.2 4.5 L0.6 8.2 Z" fill="none" stroke="#1E1E1E" stroke-width="1.1"/></svg>
<svg style="left:1061px;top:235px" width="15" height="15" viewBox="0 0 15 15"><g transform="translate(4.5,0.5)"><path d="M0.5 0.5 H6.5 L9.5 3.5 V10.5 H0.5 Z" fill="#fff" stroke="#2D2D2D" stroke-width="1"/><path d="M6.5 0.5 V3.5 H9.5" fill="none" stroke="#2D2D2D" stroke-width="1"/></g><rect x="0" y="4" width="7.5" height="10" fill="#fff"/><path d="M1.2 4.7 V6.8 Q1.2 8.3 3.6 8.3 Q6 8.3 6 6.8 V4.7" fill="none" stroke="#2D2D2D" stroke-width="1.5"/><path d="M3.6 8 V13.5" stroke="#2D2D2D" stroke-width="2"/></svg>
<div class="t" style="left:1082px;top:236px;font-size:12px;letter-spacing:0.154px">Web.config</div>
<!-- bottom tabs SE -->
<div class="a" style="left:1012px;top:416px;width:143px;height:20px;background:#fff;border-left:1px solid #8E9BBC"></div>
<div class="t" style="left:1018px;top:421px;font-size:12px;letter-spacing:-0.141px">Explorador de soluciones</div>
<div class="a" style="left:1155px;top:416px;width:169px;height:20px;background:#4D6082"></div>
<div class="t wt" style="left:1160px;top:421px;font-size:12px;letter-spacing:-0.240px">Team Explorer</div>
<div class="t wt" style="left:1244px;top:421px;font-size:12px;letter-spacing:-0.314px">Vista de clases</div>

<!-- ===== PROPERTIES ===== -->
<div class="a" style="left:1012px;top:443px;width:348px;height:255px;background:#fff;border:1px solid #8E9BBC"></div>
<div class="twt" style="left:1013px;top:444px;width:346px;height:20px"></div>
<div class="t wt" style="left:1017px;top:449px;font-size:12px;letter-spacing:-0.209px">Propiedades</div>
<svg style="left:1311px;top:452px" width="8" height="4" viewBox="0 0 8 4"><path d="M0 0 H8 L4 4Z" fill="#fff"/></svg>
<svg style="left:1327px;top:449px" width="9" height="11" viewBox="0 0 9 11"><path d="M2 0.5 H7 V6.5 H2 Z M0 6.5 H9 M4.5 6.5 V11" fill="none" stroke="#fff" stroke-width="1"/><rect x="5" y="1" width="1.5" height="5.5" fill="#fff"/></svg>
<svg style="left:1343px;top:449px" width="10" height="10" viewBox="0 0 10 10"><path d="M0.5 0.5 L9.5 9.5 M9.5 0.5 L0.5 9.5" stroke="#fff" stroke-width="1.4"/></svg>
<svg style="left:1350px;top:476px" width="6" height="3" viewBox="0 0 6 3"><path d="M0 0 H6 L3 3Z" fill="#1E1E1E"/></svg>
<div class="a" style="left:1014px;top:490px;width:344px;height:25px;background:#CFD6E5"></div>
<div class="a" style="left:1016px;top:491px;width:23px;height:22px;background:#FFF5C5;border:1px solid #E5C365"></div>
<svg style="left:1020px;top:495px" width="15" height="15" viewBox="0 0 15 15" shape-rendering="crispEdges"><rect x="0" y="0" width="5" height="5" fill="#1E1E1E"/><rect x="0" y="9" width="5" height="5" fill="#1E1E1E"/><path d="M2 1h1v3h-1z M1 2h3v1h-3z M2 10h1v3h-1z M1 11h3v1h-3z" fill="#fff"/><path d="M6 0h5v1h-5z M6 2h5v1h-5z M6 4h5v1h-5z M6 6h5v1h-5z M6 8h5v1h-5z M6 11h5v1h-5z M6 13h5v1h-5z M12 2h2v1h-2z M12 4h2v1h-2z M12 6h2v1h-2z M12 8h2v1h-2z M12 13h2v1h-2z" fill="#1E1E1E"/></svg>
<svg style="left:1043px;top:495px" width="15" height="15" viewBox="0 0 15 15"><rect x="0" y="0" width="7" height="7" fill="#2D2D2D"/><path d="M1.5 6.2 L3.5 1 L5.5 6.2 M2.3 4.3 H4.7" fill="none" stroke="#fff" stroke-width="1"/><path d="M1.2 9.7 H5.8 L1.3 13.3 H6" fill="none" stroke="#2D2D2D" stroke-width="1.4" stroke-linejoin="bevel"/><rect x="10" y="3" width="2" height="7" fill="#0A4FB5"/><path d="M7.8 8 L11 12 L14.2 8 Z" fill="#0A4FB5"/></svg>
<div class="a" style="left:1065px;top:493px;width:1px;height:20px;background:#8A94A6"></div>
<svg style="left:1071px;top:496px" width="13" height="13" viewBox="0 0 12 12"><path d="M1.2 10.8 L6 6" stroke="#A9AEBA" stroke-width="2.4" stroke-linecap="round"/><path d="M5.5 6.5 A3.3 3.3 0 0 1 9 1 L7.5 3.2 L9 4.5 L11 3 A3.3 3.3 0 0 1 5.5 6.5Z" fill="#A9AEBA"/></svg>
<div class="a" style="left:1013px;top:635px;width:346px;height:1px;background:#E5E5E5"></div>

<!-- ===== STATUS BAR ===== -->
<div class="a" style="left:0;top:705px;width:1366px;height:23px;background:#007ACC"></div>
<div class="t wt" style="left:5px;top:711px;font-size:12px;letter-spacing:-0.115px">Listo</div>
<div class="t wt" style="left:1012px;top:711px;font-size:12px;letter-spacing:-0.195px">Lín 20</div>
<div class="t wt" style="left:1104px;top:711px;font-size:12px;letter-spacing:-0.054px">Col 9</div>
<div class="t wt" style="left:1196px;top:711px;font-size:12px;letter-spacing:-0.186px">Car 9</div>
<div class="t wt" style="left:1332px;top:711px;font-size:12px;letter-spacing:-0.808px">INS</div>

<!-- ===== TASKBAR ===== -->
<div class="a" style="left:0;top:728px;width:1366px;height:40px;background:linear-gradient(to right,#170B11,#12070A 50%,#180807)"></div>
<svg style="left:16px;top:740px" width="16" height="16" viewBox="0 0 16 16"><path d="M0 2.2 L6.6 1.3 V7.5 H0 Z M7.4 1.2 L16 0 V7.5 H7.4 Z M0 8.3 H6.6 V14.6 L0 13.7 Z M7.4 8.3 H16 V16 L7.4 14.8 Z" fill="#fff"/></svg>
<svg style="left:64px;top:739px" width="17" height="18" viewBox="0 0 17 18"><circle cx="10.5" cy="6.5" r="5.3" fill="none" stroke="#fff" stroke-width="1.2"/><path d="M6.8 10.4 L0.6 16.6" stroke="#fff" stroke-width="1.3"/></svg>
<svg style="left:110px;top:740px" width="20" height="16" viewBox="0 0 20 16"><rect x="4.6" y="1.6" width="11.8" height="13.2" fill="none" stroke="#fff" stroke-width="1.2"/><path d="M2.2 3.6 H0.6 V12.6 H2.2 M17.8 3.6 H19.4 V12.6 H17.8" fill="none" stroke="#fff" stroke-width="1.1"/></svg>
<div class="a" style="left:200px;top:766px;width:40px;height:2px;background:#76B9ED"></div>
<svg style="left:209px;top:738px" width="22" height="19" viewBox="0 0 22 19"><path d="M0.5 1.5 Q0.5 0.5 1.5 0.5 H8 L9.5 2 H20.5 Q21.5 2 21.5 3 V17 Q21.5 18 20.5 18 H1.5 Q0.5 18 0.5 17 Z" fill="#FFE38A"/><path d="M0.5 1.5 Q0.5 0.5 1.5 0.5 H8 L9.5 2 V3.5 H0.5 Z" fill="#F2C03C"/><path d="M4.2 18.5 V11 Q4.2 10 5.2 10 H17 Q18 10 18 11 V18.5 H14.5 V13.5 H7.5 V18.5 Z" fill="#29A8E8"/></svg>
<svg style="left:355px;top:736px" width="22" height="22" viewBox="0 0 22 22"><defs><linearGradient id="gp" x1="0" y1="0" x2="0" y2="1"><stop offset="0" stop-color="#F59B68"/><stop offset="0.6" stop-color="#FCE3D3"/><stop offset="1" stop-color="#fff"/></linearGradient></defs><rect x="0.5" y="0.5" width="21" height="21" rx="2" fill="url(#gp)" stroke="#D24726"/><text x="3" y="16" font-family="Liberation Sans" font-weight="bold" font-size="15" fill="#CF4A0C">P</text><path d="M8 13 L21 11 V19 L9 21Z" fill="#fff" opacity="0.9"/><ellipse cx="15" cy="14" rx="3.5" ry="2.8" fill="#E8531A"/><path d="M10 18 H18 M11 20 H17" stroke="#F3A47C" stroke-width="0.8"/></svg>
<svg style="left:404px;top:736px" width="22" height="22" viewBox="0 0 22 22"><defs><linearGradient id="gx" x1="0" y1="0" x2="0" y2="1"><stop offset="0" stop-color="#8CC98F"/><stop offset="0.6" stop-color="#DDF0DD"/><stop offset="1" stop-color="#fff"/></linearGradient></defs><rect x="0.5" y="0.5" width="21" height="21" rx="2" fill="url(#gx)" stroke="#2A7A32"/><path d="M3 3 H7.5 L10.5 8.5 L13.5 3 H17.5 L12.5 10.5 L17 18 H12.5 L10.5 13 L7.5 18 H3.5 L8.5 10.5 Z" fill="#2F8C3A"/><path d="M13 13.5 L21 12.5 V19 L14 20.5Z" fill="#fff" opacity="0.85"/><path d="M14 15.5 H20 M14 17.5 H19" stroke="#4FA45A" stroke-width="0.8"/></svg>
<svg style="left:453px;top:736px" width="22" height="22" viewBox="0 0 22 22"><defs><linearGradient id="gw" x1="0" y1="0" x2="0" y2="1"><stop offset="0" stop-color="#7EA8E6"/><stop offset="0.6" stop-color="#DCE8F8"/><stop offset="1" stop-color="#fff"/></linearGradient></defs><rect x="0.5" y="0.5" width="21" height="21" rx="2" fill="url(#gw)" stroke="#1F4E9A"/><path d="M2.5 4 H6 L7.5 12 L9.5 4 H12.5 L14.5 12 L16 4 H19.5 L16.5 16 H13 L11 8.5 L9 16 H5.5 Z" fill="#1C5BC4"/><path d="M10 14 L21 12.5 V19 L11 21Z" fill="#fff" opacity="0.85"/><path d="M12 17 H19 M12 19 H18" stroke="#6C95D8" stroke-width="0.8"/></svg>
<div class="a" style="left:539px;top:728px;width:45px;height:40px;background:#433A42"></div>
<div class="a" style="left:584px;top:728px;width:3px;height:40px;background:#3A3239"></div>
<div class="a" style="left:539px;top:766px;width:48px;height:2px;background:#76B9ED"></div>
<svg style="left:551px;top:736px" width="24" height="24" viewBox="-1.5 -1.5 23 23"><path fill="#fff" stroke="#fff" stroke-width="2.4" stroke-linejoin="round" d="M0 5.2 L1.8 4.2 L7.2 8.4 L14.3 0 L19.9 2.3 V17.5 L14.3 19.7 L7.2 11.4 L1.8 15.5 L0 14.6 Z"/><path fill="#68217A" fill-rule="evenodd" d="M0 5.2 L1.8 4.2 L7.2 8.4 L14.3 0 L19.9 2.3 V17.5 L14.3 19.7 L7.2 11.4 L1.8 15.5 L0 14.6 Z M2.1 7.3 L4.7 9.9 L2.1 12.6 Z M9.9 9.9 L15 6.1 V13.8 Z"/><path fill="#fff" d="M2.1 7.3 L4.7 9.9 L2.1 12.6 Z M9.9 9.9 L15 6.1 V13.8 Z"/></svg>
<svg style="left:1115px;top:740px" width="16" height="15" viewBox="0 0 16 15"><circle cx="11" cy="3" r="2.5" fill="none" stroke="#fff" stroke-width="1.1"/><path d="M6.5 10 Q7 5.8 11 5.8 Q15 5.8 15.5 10" fill="none" stroke="#fff" stroke-width="1.1"/><circle cx="4.5" cy="7.5" r="2.5" fill="none" stroke="#fff" stroke-width="1.1"/><path d="M0.5 14.5 Q1 10.3 4.5 10.3 Q8 10.3 8.5 14.5" fill="none" stroke="#fff" stroke-width="1.1"/></svg>
<svg style="left:1153px;top:744px" width="13" height="7" viewBox="0 0 13 7"><path d="M0.5 6.5 L6.5 0.7 L12.5 6.5" fill="none" stroke="#fff" stroke-width="1.2"/></svg>
<svg style="left:1176px;top:744px" width="16" height="9" viewBox="0 0 16 9"><rect x="0.6" y="0.6" width="13" height="7.8" fill="none" stroke="#fff" stroke-width="1.2"/><rect x="2.2" y="2.2" width="6" height="4.6" fill="#fff"/><rect x="14" y="3" width="2" height="3" fill="#fff"/></svg>
<svg style="left:1201px;top:743px" width="14" height="12" viewBox="0 0 14 12"><path d="M0.8 11.5 A12 12 0 0 1 12.5 0.8 M3.5 11.5 A9 9 0 0 1 12.5 3.5 M6.2 11.5 A6 6 0 0 1 12.5 6.2 M9 11.5 A3 3 0 0 1 12 9" fill="none" stroke="#fff" stroke-width="0.9" opacity="0.85"/><circle cx="12.2" cy="11" r="1.2" fill="#fff"/></svg>
<svg style="left:1223px;top:741px" width="16" height="14" viewBox="0 0 16 14"><path d="M0.6 4.5 H3.5 L7.5 0.8 V13.2 L3.5 9.5 H0.6 Z" fill="none" stroke="#fff" stroke-width="1.1"/><path d="M9.8 4.5 Q11 7 9.8 9.5 M12 2.5 Q14 7 12 11.5" fill="none" stroke="#fff" stroke-width="1.1"/><path d="M14.2 0.8 Q17 7 14.2 13.2" fill="none" stroke="#fff" stroke-width="1" opacity="0.5"/></svg>
<div class="t wt" style="left:1252px;top:733px;font-size:12px;letter-spacing:-0.153px">3:23 p. m.</div>
<div class="t wt" style="left:1249px;top:751px;font-size:12px;letter-spacing:-0.140px">20/12/2018</div>
<svg style="left:1325px;top:740px" width="17" height="16" viewBox="0 0 17 16"><path d="M0.6 0.6 H16.4 V12 H11 L8.5 15 L6 12 H0.6 Z" fill="none" stroke="#fff" stroke-width="1.2"/></svg>
<div class="a" style="left:1361px;top:728px;width:1px;height:40px;background:#5A5055"></div>
</body></html>
